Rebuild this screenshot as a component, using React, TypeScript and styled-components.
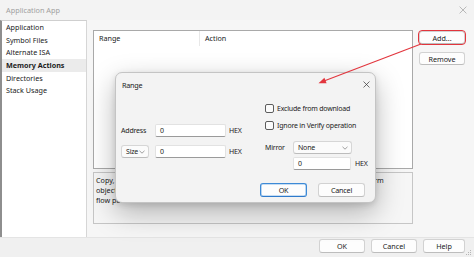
import React from "react";
import styled, { createGlobalStyle } from "styled-components";

const Global = createGlobalStyle`
  html, body { margin: 0; padding: 0; background: #f0f0f0; }
  body { font-family: "Noto Sans", "Liberation Sans", sans-serif; font-size: 7.2px; color: #1b1b1b; }
  * { box-sizing: border-box; }
`;

const Window = styled.div`
  position: relative;
  width: 474px;
  height: 257px;
  overflow: hidden;
  background: #f0f0f0;
  display: flex;
  flex-direction: column;
`;

const TitleBar = styled.div`
  height: 20px;
  flex: none;
  display: flex;
  align-items: center;
  justify-content: space-between;
  padding: 0 7px 0 6px;
  color: #a0a0a0;
  font-size: 7.3px;
  background: #f3f3f3;
`;

const Main = styled.div`
  flex: 1;
  display: flex;
  min-height: 0;
`;

const Sidebar = styled.ul`
  width: 87px;
  flex: none;
  margin: 0;
  padding: 0;
  list-style: none;
  background: #ffffff;
  border-left: 2px solid #8e8e8e;
  border-top: 1px solid #cfcfcf;
  border-right: 1px solid #d6d6d6;
`;

const SideItem = styled.li<{ $selected?: boolean }>`
  height: 12.7px;
  line-height: 12.7px;
  padding-left: 4px;
  white-space: nowrap;
  font-weight: ${(p) => (p.$selected ? 700 : 400)};
  background: ${(p) => (p.$selected ? "#ebebeb" : "transparent")};
`;

const Content = styled.div`
  flex: 1;
  display: flex;
  gap: 6px;
  padding: 10px 0 0 6px;
  background: #f6f6f6;
`;

const ListColumn = styled.div`
  width: 320px;
  display: flex;
  flex-direction: column;
`;

const Table = styled.div`
  height: 139px;
  background: #ffffff;
  border: 1px solid #a9a9a9;
`;

const TableHeader = styled.div`
  display: flex;
  height: 15px;
`;

const HeaderCell = styled.div<{ $w: number; $last?: boolean }>`
  width: ${(p) => p.$w}px;
  line-height: 15px;
  padding-left: 5px;
  border-right: ${(p) => (p.$last ? "none" : "1px solid #e8e8e8")};
`;

const Description = styled.div`
  margin-top: 3px;
  height: 52px;
  padding: 2px 2px;
  border: 1px solid #c6c6c6;
  line-height: 10px;
  white-space: nowrap;
  overflow: hidden;
`;

const ButtonColumn = styled.div`
  display: flex;
  flex-direction: column;
  gap: 8px;
  padding-top: 1px;
`;

const Button = styled.button<{ $w?: number; $h?: number; $primary?: boolean; $marked?: boolean }>`
  width: ${(p) => p.$w ?? 46}px;
  height: ${(p) => p.$h ?? 13}px;
  padding: 0;
  display: flex;
  align-items: center;
  justify-content: center;
  font-family: inherit;
  font-size: 7.2px;
  letter-spacing: inherit;
  color: #1b1b1b;
  background: #fdfdfd;
  border: 1px solid ${(p) => (p.$primary ? "#3d8ad6" : "#d2d2d2")};
  border-bottom-color: ${(p) => (p.$primary ? "#2f7acb" : "#bdbdbd")};
  border-radius: 3px;
  box-shadow: ${(p) => (p.$primary ? "inset 0 0 0 0.6px #8fbde9" : "none")};
  outline: ${(p) => (p.$marked ? "1.5px solid #e2353d" : "none")};
  outline-offset: 0.5px;
`;

const BottomBar = styled.div`
  height: 20px;
  flex: none;
  display: flex;
  justify-content: flex-end;
  align-items: flex-start;
  gap: 6px;
  padding: 1px 9px 0 0;
  border-top: 1px solid #e4e4e4;
  background: #f0f0f0;
`;

const Dialog = styled.div`
  position: absolute;
  left: 115px;
  top: 72px;
  width: 261px;
  height: 131px;
  font-size: 7px;
  letter-spacing: -0.2px;
  background: #f3f3f3;
  border: 1px solid #c4c4c4;
  border-radius: 7px;
  box-shadow: 0 10px 28px rgba(0, 0, 0, 0.28), 0 2px 6px rgba(0, 0, 0, 0.12);
  display: flex;
  flex-direction: column;
`;

const DialogTitle = styled.div`
  height: 23px;
  display: flex;
  align-items: center;
  justify-content: space-between;
  padding: 0 5px 0 6px;
  font-size: 7.2px;
`;

const DialogBody = styled.div`
  display: flex;
  padding-left: 5px;
`;

const FieldsColumn = styled.div`
  width: 144px;
  padding-top: 28px;
  display: flex;
  flex-direction: column;
  gap: 8px;
`;

const FieldRow = styled.div`
  display: flex;
  align-items: center;
  height: 13px;
`;

const Label = styled.span<{ $w?: number }>`
  width: ${(p) => (p.$w ? `${p.$w}px` : "auto")};
  flex: none;
`;

const Input = styled.div<{ $w: number }>`
  width: ${(p) => p.$w}px;
  height: 13px;
  line-height: 12px;
  padding-left: 4px;
  background: #ffffff;
  border: 1px solid #e2e2e2;
  border-bottom-color: #9a9a9a;
  border-radius: 2px;
`;

const Hex = styled.span`
  margin-left: 3px;
`;

const Select = styled.div<{ $w: number; $gapRight?: number }>`
  width: ${(p) => p.$w}px;
  height: 13px;
  margin-right: ${(p) => p.$gapRight ?? 0}px;
  display: flex;
  align-items: center;
  justify-content: space-between;
  padding: 0 3px 0 4px;
  background: #fbfbfb;
  border: 1px solid #d6d6d6;
  border-bottom-color: #bcbcbc;
  border-radius: 3px;
  flex: none;
`;

const OptionsColumn = styled.div`
  padding-top: 8px;
  display: flex;
  flex-direction: column;
`;

const CheckRow = styled.label<{ $gap?: number }>`
  display: flex;
  align-items: center;
  gap: 3px;
  height: 9px;
  margin-top: ${(p) => p.$gap ?? 0}px;
  white-space: nowrap;
`;

const CheckBox = styled.span`
  width: 9px;
  height: 9px;
  border: 1px solid #5c5c5c;
  border-radius: 2px;
  background: #fbfbfb;
  flex: none;
`;

const MirrorGrid = styled.div`
  margin-top: 11px;
  display: grid;
  grid-template-columns: 28px 59px auto;
  row-gap: 3px;
  align-items: center;
`;

const DialogFooter = styled.div`
  display: flex;
  justify-content: flex-end;
  gap: 11px;
  padding-right: 10px;
  margin-top: 13px;
`;

const Overlay = styled.svg`
  position: absolute;
  left: 0;
  top: 0;
  pointer-events: none;
`;

const Chevron = () => (
  <svg width="6" height="4" viewBox="0 0 6 4">
    <polyline points="0.5,0.8 3,3.2 5.5,0.8" fill="none" stroke="#7a7a7a" strokeWidth="0.7" />
  </svg>
);

const CloseX = ({ color, size }: { color: string; size: number }) => (
  <svg width={size} height={size} viewBox="0 0 8 8">
    <path d="M0.6 0.6 L7.4 7.4 M7.4 0.6 L0.6 7.4" stroke={color} strokeWidth="0.8" />
  </svg>
);

const navItems = ["Application", "Symbol Files", "Alternate ISA", "Memory Actions", "Directories", "Stack Usage"];

export default function App() {
  return (
    <>
      <Global />
      <Window>
        <TitleBar>
          <span>Application App</span>
          <CloseX color="#a8a8a8" size={8} />
        </TitleBar>
        <Main>
          <Sidebar>
            {navItems.map((n) => (
              <SideItem key={n} $selected={n === "Memory Actions"}>
                {n}
              </SideItem>
            ))}
          </Sidebar>
          <Content>
            <ListColumn>
              <Table>
                <TableHeader>
                  <HeaderCell $w={106}>Range</HeaderCell>
                  <HeaderCell $w={210} $last>Action</HeaderCell>
                </TableHeader>
              </Table>
              <Description>
                <div>Copy, fill or save a memory range before or after the download, or use it to transform</div>
                <div>object data setup</div>
                <div>flow paths.</div>
              </Description>
            </ListColumn>
            <ButtonColumn>
              <Button $marked>Add...</Button>
              <Button>Remove</Button>
            </ButtonColumn>
          </Content>
        </Main>
        <BottomBar>
          <Button $h={14}>OK</Button>
          <Button $h={14}>Cancel</Button>
          <Button $h={14} $w={42}>Help</Button>
        </BottomBar>

        <Dialog>
          <DialogTitle>
            <span>Range</span>
            <CloseX color="#333" size={7} />
          </DialogTitle>
          <DialogBody>
            <FieldsColumn>
              <FieldRow>
                <Label $w={34}>Address</Label>
                <Input $w={71}>0</Input>
                <Hex>HEX</Hex>
              </FieldRow>
              <FieldRow>
                <Select $w={28} $gapRight={6}>
                  <span>Size</span>
                  <Chevron />
                </Select>
                <Input $w={71}>0</Input>
                <Hex>HEX</Hex>
              </FieldRow>
            </FieldsColumn>
            <OptionsColumn>
              <CheckRow>
                <CheckBox />
                Exclude from download
              </CheckRow>
              <CheckRow $gap={8}>
                <CheckBox />
                Ignore in Verify operation
              </CheckRow>
              <MirrorGrid>
                <Label>Mirror</Label>
                <Select $w={59}>
                  <span>None</span>
                  <Chevron />
                </Select>
                <span />
                <span />
                <Input $w={58}>0</Input>
                <Hex>HEX</Hex>
              </MirrorGrid>
            </OptionsColumn>
          </DialogBody>
          <DialogFooter>
            <Button $w={47} $h={14} $primary>OK</Button>
            <Button $w={47} $h={14}>Cancel</Button>
          </DialogFooter>
        </Dialog>

        <Overlay width="474" height="257" viewBox="0 0 474 257">
          <line x1="421" y1="44" x2="324" y2="81" stroke="#e2353d" strokeWidth="1.1" />
          <polygon points="318.5,83.2 326.6,83.3 324.4,77.7" fill="#e2353d" />
          <g fill="#b5b5b5">
            <rect x="470" y="250" width="1" height="1" />
            <rect x="468" y="252" width="1" height="1" />
            <rect x="470" y="252" width="1" height="1" />
            <rect x="466" y="254" width="1" height="1" />
            <rect x="468" y="254" width="1" height="1" />
            <rect x="470" y="254" width="1" height="1" />
          </g>
        </Overlay>
      </Window>
    </>
  );
}
